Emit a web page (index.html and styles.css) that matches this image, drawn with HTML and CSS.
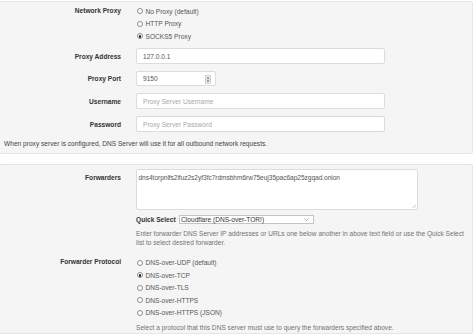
FILE: index.html
```html
<!DOCTYPE html>
<html>
<head>
<meta charset="utf-8">
<link rel="stylesheet" href="styles.css">
</head>
<body>
<div class="well well-proxy">
  <div class="row radio-row">
    <div class="lbl">Network Proxy</div>
    <div class="ctl">
      <label class="radio"><input type="radio" name="proxy"><span>No Proxy (default)</span></label>
      <label class="radio"><input type="radio" name="proxy"><span>HTTP Proxy</span></label>
      <label class="radio"><input type="radio" name="proxy" checked><span>SOCKS5 Proxy</span></label>
    </div>
  </div>
  <div class="row input-row first-input">
    <div class="lbl">Proxy Address</div>
    <div class="ctl"><div class="input wide">127.0.0.1</div></div>
  </div>
  <div class="row input-row">
    <div class="lbl">Proxy Port</div>
    <div class="ctl">
      <div class="input port">9150
        <svg class="spin" width="6" height="9" viewBox="0 0 6 9"><rect x="0.5" y="0.5" width="5" height="8" fill="#f2f2f2" stroke="#b8b8b8" stroke-width="0.6"/><line x1="0.5" y1="4.5" x2="5.5" y2="4.5" stroke="#c8c8c8" stroke-width="0.5"/><path d="M1.6 3.4 L3 1.8 L4.4 3.4 Z" fill="#555"/><path d="M1.6 5.6 L3 7.2 L4.4 5.6 Z" fill="#555"/></svg>
      </div>
    </div>
  </div>
  <div class="row input-row">
    <div class="lbl">Username</div>
    <div class="ctl"><div class="input wide placeholder">Proxy Server Username</div></div>
  </div>
  <div class="row input-row">
    <div class="lbl">Password</div>
    <div class="ctl"><div class="input wide placeholder">Proxy Server Password</div></div>
  </div>
  <p class="note">When proxy server is configured, DNS Server will use it for all outbound network requests.</p>
</div>

<div class="well well-fwd">
  <div class="row fwd-row">
    <div class="lbl">Forwarders</div>
    <div class="ctl">
      <div class="textarea">dns4torpnlfs2ifuz2s2yf3fc7rdmsbhm6rw75euj35pac6ap25zgqad.onion
        <svg class="grip" width="4" height="4" viewBox="0 0 4 4"><line x1="0.5" y1="3.8" x2="3.8" y2="0.5" stroke="#aaa" stroke-width="0.5"/><line x1="2" y1="3.8" x2="3.8" y2="2" stroke="#aaa" stroke-width="0.5"/></svg>
      </div>
      <div class="quick">
        <span class="quick-lbl">Quick Select</span>
        <div class="select"><span>Cloudflare (DNS-over-TOR!)</span>
          <svg width="5" height="3" viewBox="0 0 5 3"><path d="M0.5 0.5 L2.5 2.5 L4.5 0.5" fill="none" stroke="#777" stroke-width="0.6"/></svg>
        </div>
      </div>
      <p class="help help-fwd">Enter forwarder DNS Server IP addresses or URLs one below another in above text field or use the Quick Select list to select desired forwarder.</p>
    </div>
  </div>
  <div class="row radio-row proto-row">
    <div class="lbl">Forwarder Protocol</div>
    <div class="ctl">
      <label class="radio"><input type="radio" name="proto"><span>DNS-over-UDP (default)</span></label>
      <label class="radio"><input type="radio" name="proto" checked><span>DNS-over-TCP</span></label>
      <label class="radio"><input type="radio" name="proto"><span>DNS-over-TLS</span></label>
      <label class="radio"><input type="radio" name="proto"><span>DNS-over-HTTPS</span></label>
      <label class="radio"><input type="radio" name="proto"><span>DNS-over-HTTPS (JSON)</span></label>
      <p class="help help-proto">Select a protocol that this DNS server must use to query the forwarders specified above.</p>
    </div>
  </div>
</div>
</body>
</html>
```

FILE: styles.css
```css
* {
  box-sizing: border-box;
}

body {
  margin: 0;
  background: #ffffff;
  font-family: "Liberation Sans", Arial, sans-serif;
  font-size: 6.6px;
  line-height: 9px;
  color: #333333;
}

.well {
  width: 474px;
  margin-left: -1px;
  background: #f5f5f5;
  border: 1px solid #e6e6e6;
  border-radius: 2px;
  padding: 0 6px 0 1px;
}

.well-proxy {
  margin-top: 1px;
  padding-top: 3px;
  padding-bottom: 4.5px;
}

.well-fwd {
  margin-top: 10px;
  padding-top: 4px;
  padding-bottom: 1px;
}

.row {
  display: grid;
  grid-template-columns: 120px 1fr;
  column-gap: 15px;
}

.lbl {
  text-align: right;
  font-weight: bold;
  color: #333333;
  white-space: nowrap;
}

.radio-row .lbl {
  line-height: 12.5px;
}

.radio {
  display: flex;
  align-items: center;
  height: 12.5px;
  color: #555555;
}

.radio input {
  -webkit-appearance: none;
  appearance: none;
  width: 6px;
  height: 6px;
  margin: 0 3px 0 0.5px;
  border: 0.7px solid #8a8a8a;
  border-radius: 50%;
  background: #ffffff;
  position: relative;
  flex: none;
}

.radio input:checked::after {
  content: "";
  position: absolute;
  left: 1px;
  top: 1px;
  width: 2.6px;
  height: 2.6px;
  border-radius: 50%;
  background: #222222;
}

.input-row {
  align-items: center;
  margin-bottom: 7px;
}

.first-input {
  margin-top: 5.5px;
}

.input {
  height: 16px;
  background: #ffffff;
  border: 1px solid #dcdcdc;
  border-radius: 2px;
  padding: 0 6px;
  display: flex;
  align-items: center;
  color: #555555;
  position: relative;
}

.input.wide {
  width: 249px;
}

.input.port {
  width: 80px;
  height: 15px;
}

.input.placeholder {
  color: #a8a8a8;
}

.spin {
  position: absolute;
  left: 68px;
  top: 2.5px;
}

.note {
  margin: 6px 0 0 3px;
  color: #444444;
}

.fwd-row .lbl {
  padding-top: 4px;
}

.textarea {
  position: relative;
  width: 282px;
  height: 41px;
  background: #ffffff;
  border: 1px solid #dcdcdc;
  border-radius: 2px;
  padding: 3px 1.5px;
  color: #555555;
  letter-spacing: -0.05px;
}

.grip {
  position: absolute;
  right: 1px;
  bottom: 1px;
}

.quick {
  display: flex;
  align-items: center;
  margin-top: 5px;
  height: 9.5px;
}

.quick-lbl {
  font-weight: bold;
  color: #333333;
  margin-right: 3px;
  white-space: nowrap;
}

.select {
  width: 135px;
  height: 9.5px;
  background: #ffffff;
  border: 1px solid #c4c4c4;
  display: flex;
  align-items: center;
  justify-content: space-between;
  padding: 0 4px 0 1.5px;
  color: #333333;
}

.help {
  margin: 0;
  color: #737373;
}

.help-fwd {
  margin-top: 5.3px;
}

.proto-row {
  margin-top: 9.2px;
}

.help-proto {
  margin-top: 3.7px;
}
```
